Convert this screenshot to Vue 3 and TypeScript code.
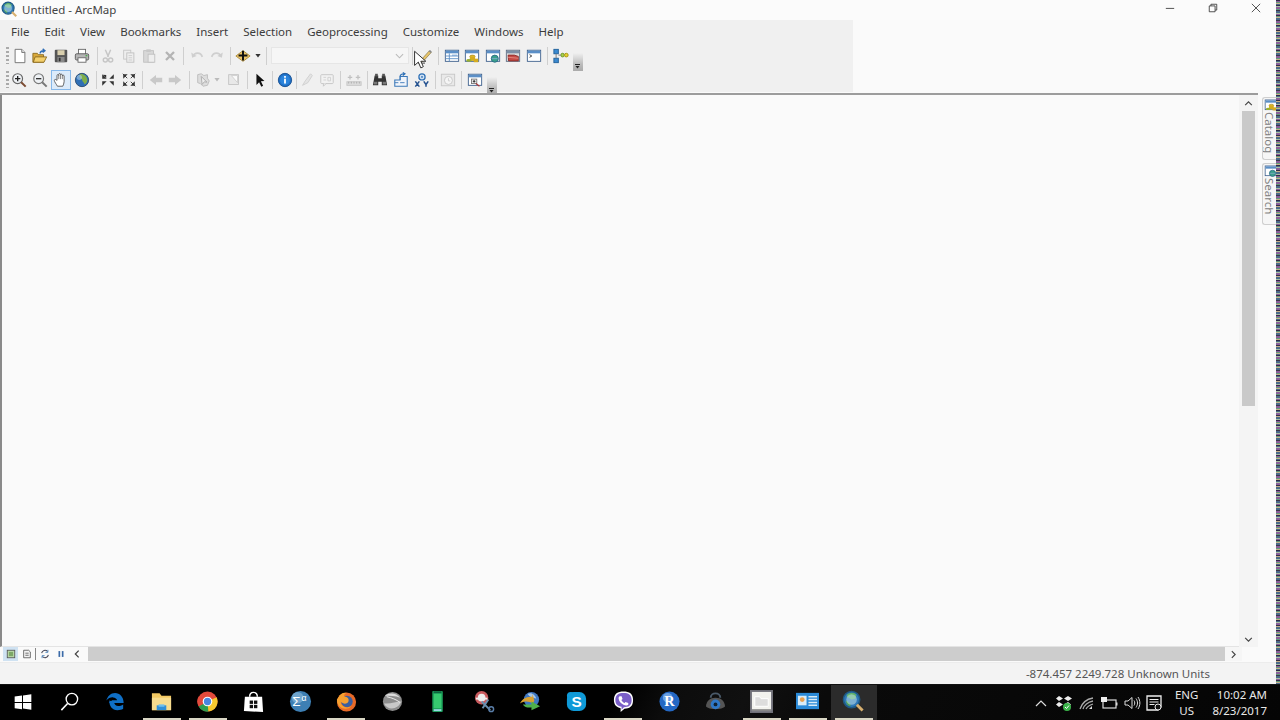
<script setup lang="ts">
interface Item { n: string; x: number; w?: number; h?: number }

const menus = ['File', 'Edit', 'View', 'Bookmarks', 'Insert', 'Selection', 'Geoprocessing', 'Customize', 'Windows', 'Help']

const row1: Item[] = [
  { n: 'grip', x: 7, w: 3 }, { n: 'new', x: 20 }, { n: 'open', x: 40 }, { n: 'save', x: 61 }, { n: 'print', x: 82 },
  { n: 'sep', x: 97, w: 1 }, { n: 'cut', x: 108 }, { n: 'copy', x: 129 }, { n: 'paste', x: 149 }, { n: 'del', x: 170 },
  { n: 'sep', x: 183, w: 1 }, { n: 'undo', x: 197 }, { n: 'redo', x: 217 }, { n: 'sep', x: 230, w: 1 },
  { n: 'add', x: 243 }, { n: 'caret', x: 258, w: 6 }, { n: 'sep', x: 266, w: 1 }, { n: 'combo', x: 340, w: 138 },
  { n: 'sep', x: 412, w: 1 }, { n: 'editor', x: 425 }, { n: 'sep', x: 438, w: 1 }, { n: 'table', x: 452 },
  { n: 'catalog', x: 472 }, { n: 'searchw', x: 493 }, { n: 'toolbox', x: 513 }, { n: 'python', x: 534 },
  { n: 'sep', x: 547, w: 1 }, { n: 'model', x: 561 }, { n: 'over', x: 577.5, w: 10 }
]
const row2: Item[] = [
  { n: 'grip', x: 7, w: 3 }, { n: 'zoomin', x: 19 }, { n: 'zoomout', x: 40 }, { n: 'pan', x: 61 }, { n: 'globe', x: 82 },
  { n: 'sep', x: 96, w: 1 }, { n: 'fixin', x: 108 }, { n: 'fixout', x: 129 }, { n: 'sep', x: 142, w: 1 },
  { n: 'back', x: 156 }, { n: 'fwd', x: 175 }, { n: 'sep', x: 189, w: 1 }, { n: 'selfeat', x: 203 }, { n: 'caretl', x: 217, w: 6 },
  { n: 'clear', x: 234 }, { n: 'sep', x: 247, w: 1 }, { n: 'pointer', x: 260 }, { n: 'sep', x: 272, w: 1 },
  { n: 'identify', x: 285 }, { n: 'sep', x: 296, w: 1 }, { n: 'flash', x: 307 }, { n: 'html', x: 327 }, { n: 'sep', x: 340, w: 1 },
  { n: 'measure', x: 354 }, { n: 'sep', x: 367, w: 1 }, { n: 'find', x: 380 }, { n: 'goto', x: 401 }, { n: 'xy', x: 422 },
  { n: 'sep', x: 435, w: 1 }, { n: 'time', x: 448 }, { n: 'sep', x: 461, w: 1 }, { n: 'viewer', x: 475 }, { n: 'over', x: 491.5, w: 10 }
]

function place(items: Item[]) {
  let right = 0
  return items.map((it) => {
    const w = it.w ?? 20
    const ml = it.x - w / 2 - right
    right = it.x + w / 2
    return { ...it, w, ml }
  })
}
const rows = [place(row1), place(row2)]

const win = (extra: string) =>
  `<rect x="1.5" y="2.5" width="15" height="12.5" fill="#fff" stroke="#3d5f8c"/><rect x="2" y="3" width="14" height="3" fill="#5b8fc7"/>${extra}`

const icons: Record<string, string> = {
  new: '<path d="M3.5 1.5h7.5l3.5 3.5v11.5h-11z" fill="#fff" stroke="#6a6a6a"/><path d="M11 1.5V5h3.5" fill="#e8e8e8" stroke="#6a6a6a"/>',
  open: '<path d="M1 16V6h5l1 1.5h6V16z" fill="#d9a93a" stroke="#8a6a20"/><path d="M1.5 16l2-6h13l-3 6z" fill="#f3cf6c" stroke="#8a6a20"/><path d="M9 6c.5-2 2-3 4-3M12 1l2.5 2-2.5 2" fill="none" stroke="#2f6db5" stroke-width="1.6"/>',
  save: '<rect x="2" y="2" width="14" height="14" rx="1" fill="#555"/><rect x="5" y="2.5" width="8" height="5.5" fill="#d9cfae"/><rect x="5" y="10" width="8" height="6" fill="#8a8a8a"/><rect x="6.5" y="11" width="2" height="4" fill="#333"/>',
  print: '<rect x="5" y="1.5" width="8" height="6" fill="#fff" stroke="#666"/><rect x="1.5" y="6.5" width="15" height="7" rx="1.5" fill="#b5b5b5" stroke="#555"/><rect x="4.5" y="11" width="9" height="5" fill="#fff" stroke="#666"/><rect x="13" y="8" width="2" height="1.4" fill="#4a4"/>',
  cut: '<path d="M6 2l3.5 8M12 2L8.5 10" stroke="#c6c6c6" stroke-width="1.6" fill="none"/><circle cx="6" cy="13.5" r="2.3" fill="none" stroke="#c6c6c6" stroke-width="1.6"/><circle cx="12" cy="13.5" r="2.3" fill="none" stroke="#c6c6c6" stroke-width="1.6"/>',
  copy: '<rect x="3" y="2.5" width="8" height="10" fill="#eee" stroke="#c6c6c6"/><rect x="6.5" y="5.5" width="8" height="10.5" fill="#eee" stroke="#c0c0c0"/><path d="M8.5 8.5h4M8.5 11h4M8.5 13.500h4" stroke="#ccc"/>',
  paste: '<rect x="3" y="3" width="11" height="13" fill="#d8d8d8" stroke="#c0c0c0"/><rect x="6" y="1.5" width="5" height="3" fill="#c8c8c8"/><rect x="8" y="7" width="7.500" height="9" fill="#eee" stroke="#c0c0c0"/>',
  del: '<path d="M4.500 4.500l9 9M13.500 4.500l-9 9" stroke="#b4b4b4" stroke-width="2.600"/>',
  undo: '<path d="M5 9c1-4 8-5 10 1" fill="none" stroke="#cfcfcf" stroke-width="2"/><path d="M2.500 5l1 6 5-2z" fill="#cfcfcf"/>',
  redo: '<path d="M13 9c-1-4-8-5-10 1" fill="none" stroke="#cfcfcf" stroke-width="2"/><path d="M15.500 5l-1 6-5-2z" fill="#cfcfcf"/>',
  add: '<path d="M9 3l8 6-8 6-8-6z" fill="#eec76a" stroke="#a98a3c"/><path d="M9 3v11M4 8.500h10" stroke="#111" stroke-width="2.200"/>',
  editor: '<path d="M5 13L14 3l2 2-9 10-3 1z" fill="#e8c56a" stroke="#8a7a4a" stroke-width=".8"/><path d="M1 17h8" stroke="#333"/><path d="M14 3l2 2" stroke="#888" stroke-width="2"/>',
  table: win('<path d="M2 9h14M2 12h14M6 6v9" stroke="#5b8fc7"/><rect x="9" y="7.500" width="6" height="1.200" fill="#7aa6d6"/>'),
  catalog: win('<ellipse cx="9.500" cy="9.500" rx="3" ry="1.500" fill="#e8c030" stroke="#8a7010" stroke-width=".6"/><rect x="6.500" y="9.500" width="6" height="5" fill="#d4ac20"/><ellipse cx="5.500" cy="14" rx="3" ry="1.500" fill="#9ab030"/><rect x="11" y="12" width="5" height="4" fill="#d4ac20"/>'),
  searchw: win('<circle cx="11" cy="12" r="4" fill="#3aa08a" stroke="#2a6a8a"/><path d="M8 12h6" stroke="#9ad" stroke-width=".8"/>'),
  toolbox: '<rect x="1.500" y="2.500" width="15" height="12.500" fill="#ddd" stroke="#5a6a80"/><rect x="2" y="3" width="14" height="3" fill="#7a8fa6"/><path d="M3.500 8h7l4.500 1.500v5h-11z" fill="#c44a45" stroke="#8a2a28"/><path d="M3.500 10.500l11.500 1" stroke="#e58a80"/>',
  python: win('<path d="M4 7.500l2.500 1.500-2.500 1.500" fill="none" stroke="#333" stroke-width="1"/>'),
  model: '<rect x="1" y="1.500" width="5" height="5" fill="#3b8ad0" stroke="#1f5f99"/><rect x="1" y="11.500" width="5" height="5" fill="#3b8ad0" stroke="#1f5f99"/><rect x="9" y="6" width="3.500" height="4" rx="1.500" fill="#a8d050" stroke="#6a9020"/><rect x="13" y="6" width="4" height="4" rx="1.800" fill="#e8d030" stroke="#a09010"/><path d="M3.500 6.500v5M6 8h3" stroke="#777"/>',
  zoomin: '<circle cx="7.500" cy="7.500" r="5.500" fill="#eef1f4" stroke="#666" stroke-width="1.300"/><path d="M7.500 4.500v6M4.500 7.500h6" stroke="#222" stroke-width="1.500"/><path d="M11.500 11.500l5 5" stroke="#7a4a30" stroke-width="2.200"/>',
  zoomout: '<circle cx="7.500" cy="7.500" r="5.500" fill="#eef1f4" stroke="#777" stroke-width="1.300"/><path d="M4.500 7.500h6" stroke="#333" stroke-width="1.500"/><path d="M11.500 11.500l5 5" stroke="#777" stroke-width="2.200"/>',
  pan: '<path d="M5 16c-1-2-3.500-5-3.500-6.500S3.500 8 4.500 9.500V4c0-1.500 2-1.500 2 0V2.800c0-1.500 2-1.500 2 0V3.500c0-1.400 2-1.400 2 0v1c0-1.300 2-1.300 2 0V11c0 2-1 3.500-1.500 5z" fill="#fff" stroke="#555"/><path d="M6.500 4v4M8.500 3.500V8M10.500 4.500V8" stroke="#555" stroke-width=".8"/>',
  globe: '<circle cx="9" cy="9" r="7.500" fill="#2f6fb5"/><path d="M7 2c4 0 8 3 8 7 0 2-1 4-3 5-1-3-3-3-3-6-2 0-3-2-3-3z" fill="#7fae4a"/><circle cx="6" cy="6" r="3" fill="#a8cdee" opacity=".6"/><circle cx="9" cy="9" r="7.500" fill="none" stroke="#2a4a70"/>',
  fixin: '<g fill="#333"><path d="M3 3l4 4V3.500zM3 3h0"/><path d="M2.500 2.500l5 5h-5zM15.500 2.500l-5 5h5zM2.500 15.500l5-5h-5zM15.500 15.500l-5-5h5z"/></g>',
  fixout: '<g fill="#333"><path d="M2.500 2.500h5l-5 5zM15.500 2.500h-5l5 5zM2.500 15.500h5l-5-5zM15.500 15.500h-5l5-5z"/></g><path d="M7 7L2 2M11 7l5-5M7 11l-5 5M11 11l5 5" stroke="#333"/>',
  back: '<path d="M9 3.500L2 9l7 5.500V11.500h7v-5H9z" fill="#c8c8c8"/>',
  fwd: '<path d="M9 3.500L16 9l-7 5.500V11.500H2v-5h7z" fill="#c8c8c8"/>',
  selfeat: '<path d="M3 3l4-1 3 2 4-1v4l2 3-2 5-5 1-3-3-3-1z" fill="#ddd" stroke="#bbb"/><path d="M7 5l1 9 2.500-3 3 .5z" fill="#eee" stroke="#aaa"/>',
  clear: '<rect x="3" y="3" width="11" height="11" fill="#e8e8e8" stroke="#c4c4c4"/><path d="M6 4l7 8v-8z" fill="#fafafa" stroke="#cdcdcd"/>',
  pointer: '<path d="M5 2l9 8-4 .5 2.500 5-2 1-2.500-5-3 3z" fill="#111"/>',
  identify: '<circle cx="9" cy="9" r="7.500" fill="#1f6fc4" stroke="#174f90"/><circle cx="9" cy="9" r="5.500" fill="#2b84dc"/><rect x="8" y="7.500" width="2" height="5.500" fill="#fff"/><rect x="8" y="4.500" width="2" height="2" fill="#fff"/>',
  flash: '<path d="M13 2L7 10l-3 5 6-3 5-8z" fill="#e4e4e4" stroke="#cfcfcf"/>',
  html: '<rect x="2" y="3" width="14" height="10" rx="1" fill="#f2f2f2" stroke="#c4c4c4"/><path d="M5 13v3l3-3" fill="#f2f2f2" stroke="#c4c4c4"/><path d="M5 6h3M5 9h3M10 6h3v4h-3z" stroke="#cfcfcf" fill="none"/>',
  measure: '<rect x="1" y="11" width="16" height="4" fill="#ddd" stroke="#c4c4c4"/><path d="M3 11v2M6 11v2M9 11v2M12 11v2M15 11v2" stroke="#aaa"/><path d="M2 6h5M4.500 3.500v5M11 6h5M13.500 3.500v5" stroke="#c0c0c0" stroke-width="1.400"/>',
  find: '<path d="M3 4h4v3h4V4h4l2 11h-6v-4H7v4H1z" fill="#333"/><rect x="3.500" y="2" width="3" height="3" fill="#555"/><rect x="11.500" y="2" width="3" height="3" fill="#555"/><rect x="2" y="11" width="4" height="3" fill="#777"/><rect x="12" y="11" width="4" height="3" fill="#777"/>',
  goto: '<path d="M8 5h8v11H2V9h6z" fill="#f0f4fa" stroke="#3b78b8" stroke-width="1.200"/><path d="M8 9V5M8 12h5M2 12h4" stroke="#3b78b8"/><path d="M8 5c0-2 2-3 4-3M11 .5l2.500 1.500L11 4" fill="none" stroke="#2d6fb5" stroke-width="1.300"/>',
  xy: '<circle cx="9" cy="5.500" r="3.500" fill="#cfe0f2" stroke="#2d6fb5" stroke-width="1.400"/><circle cx="9" cy="5.500" r="1" fill="#2d6fb5"/><path d="M1.500 10.500l4.500 6M6 10.500l-4.500 6M11 10.500l2.500 3.500v2.500M16 10.500L13.500 14" stroke="#22508f" stroke-width="1.700" fill="none"/>',
  time: '<rect x="1.500" y="2.500" width="15" height="13" fill="#e9e9e9" stroke="#c6c6c6"/><circle cx="9.500" cy="9.500" r="4.500" fill="#f5f5f5" stroke="#c6c6c6"/><path d="M9.500 7v3h2" stroke="#ccc" fill="none"/>',
  viewer: win('<rect x="5" y="8" width="6" height="5" fill="#eee" stroke="#777"/><path d="M6.500 10.500h3M8 9v3" stroke="#222"/><path d="M10 13l4 3" stroke="#a33" stroke-width="1.300"/>')
}

const bigIcons: Record<string, string> = {
  win: '<path d="M2 5.500L10.800 4.300V12H2zM12 4.100L22 2.800V12H12zM2 13.200h8.800v7.400L2 19.400zM12 13.200h10v8.100l-10-1.400z" fill="#fff"/>',
  search: '<circle cx="14.500" cy="9.500" r="6" fill="none" stroke="#fff" stroke-width="1.400"/><path d="M10 14L3.500 21" stroke="#fff" stroke-width="1.600"/>',
  edge: '<path d="M5 13.500h15.500C20.500 7 16.500 3 11.500 3 7 3 3.500 6.500 2.500 11c2-2.500 4.500-3.500 7-3.300 2 .2 4.200 1.600 4.300 3H8.500" fill="#0f6fc6"/><path d="M5.500 11c0 6 3 10 8.500 10 2.500 0 4.500-.5 6-1.500v-4.500c-4 2.500-9 2.500-9.500-2.500" fill="#0f6fc6"/>',
  folder: '<path d="M2 3.500h8l2 2.500h10v15H2z" fill="#f2c862"/><path d="M2 8h20v13H2z" fill="#f7dc8e"/><path d="M7 21v-5h10v5" fill="#2f8fd8"/><rect x="9" y="15" width="6" height="2.500" fill="#6fc0ee"/>',
  chrome: '<circle cx="12" cy="12" r="10.500" fill="#e24a3c"/><path d="M12 12L2.800 17.200A10.500 10.500 0 0 1 3 6.500z" fill="#e24a3c"/><path d="M12 12l-9.200 5.200A10.500 10.500 0 0 0 13 22.500z" fill="#2f9e4f"/><path d="M12 12l1 10.500A10.500 10.500 0 0 0 21.500 7.500z" fill="#f5c92f"/><circle cx="12" cy="12" r="5" fill="#fff"/><circle cx="12" cy="12" r="3.800" fill="#4a86e0"/>',
  store: '<path d="M3 7h18l1 16-20-1z" fill="#fff"/><path d="M8 7c0-6 8-6 8 0" fill="none" stroke="#fff" stroke-width="1.500"/><g fill="#111"><rect x="8" y="11" width="3.500" height="3.500"/><rect x="12.500" y="11" width="3.500" height="3.500"/><rect x="8" y="15.500" width="3.500" height="3.500"/><rect x="12.500" y="15.500" width="3.500" height="3.500"/></g>',
  firefox: '<circle cx="12" cy="12.500" r="10" fill="#e86a28"/><circle cx="12.500" cy="12" r="6" fill="#3a5fa0"/><path d="M4 7c1-3 5-5 8-4-3 1-3 4-1 4 2 .5 4 2 3 5-1 3-6 3-8 0 0 5 6 8 11 5-4 5-15 3-15-7z" fill="#f5a030"/>',
  gray: '<circle cx="12" cy="12" r="10" fill="#8d8d8d"/><path d="M4 6c5-4 12-3 16 2-5-2-11-2-16-2z" fill="#dcdcdc"/><path d="M3 14c6 1 13-2 18-2-2 7-13 11-18 2z" fill="#c8c8c8"/><path d="M6 7c5 1 10 3 14 6" stroke="#eee" fill="none"/>',
  battery: '<rect x="5.500" y="1" width="11" height="22" rx="1" fill="#1a9a58"/><rect x="7" y="4" width="8" height="15" fill="#36c96f"/><rect x="7" y="1.500" width="8" height="1.500" fill="#0d5a3c"/><rect x="7" y="20" width="8" height="2" fill="#96d8e0"/>',
  scissor: '<circle cx="9" cy="8" r="7" fill="#c85a5e"/><circle cx="9" cy="8" r="4" fill="#eee"/><path d="M9 12l9 9M16 10l-6 9" stroke="#6a8fb0" stroke-width="2"/><circle cx="19" cy="20" r="2.500" fill="none" stroke="#5a7ea8" stroke-width="1.500"/><path d="M3 9h12" stroke="#eee" stroke-width="2"/>',
  idm: '<circle cx="13" cy="10" r="8" fill="#3f78c2"/><path d="M9 4c4-2 8 1 9 5-3-1-7-1-9-5z" fill="#a8c8e8"/><path d="M1 14c3-6 8-7 13-7v-3l2 7-1 2-1 1c-3-2-8-3-13 0z" fill="#d8a030"/><path d="M4 15h9v-3l9 5-9 4v-3c-3 1-7 0-9-3z" fill="#4fb04a"/>',
  skype: '<rect x="2" y="2" width="20" height="20" rx="7" fill="#0f9ad8"/><circle cx="6" cy="6" r="4" fill="#0f9ad8"/><text x="12" y="18" text-anchor="middle" font-family="Liberation Sans" font-weight="700" font-size="16" fill="#fff">S</text>',
  viber: '<path d="M12 1.500c6 0 10 2 10 9s-4 9-9 9l-4 3.500v-4c-4-1-7-3-7-8.500 0-7 4-9 10-9z" fill="#fff"/><path d="M12 3c5 0 8.500 1.500 8.500 7.500S17 18 12.500 18l-2.500 2.500V17.500C6 17 3.500 15 3.500 10.500 3.500 4.500 7 3 12 3z" fill="#7a5fc8"/><path d="M8 6.500l2 0 1 3-1.200 1c.7 1.500 1.700 2.500 3.200 3.200l1-1.200 3 1v2c-1 1-3 1-5 0-3-1.500-4.500-3.500-5-6-.2-1.500 0-2.500 1-3z" fill="#fff"/>',
  r: '<circle cx="12" cy="12" r="10.500" fill="#2468c4"/><circle cx="10" cy="8" r="5" fill="#6aa0e4"/><text x="12" y="17" text-anchor="middle" font-family="Liberation Serif" font-weight="700" font-size="15" fill="#fff">R</text>',
  eye: '<path d="M2 17c1-6 4-9 10-9s9 3 10 9c-3 4-17 4-20 0z" fill="#555"/><circle cx="12" cy="15" r="5" fill="#2f78c8"/><circle cx="12" cy="15" r="2" fill="#123"/><path d="M7 8c0-6 10-6 10 0" fill="none" stroke="#4a5a6a" stroke-width="2"/>',
  gwin: '<rect x="0" y="0" width="24" height="24" fill="#707078"/><rect x="2" y="2" width="20" height="20" fill="#f2f2ee"/><path d="M5 7h5l1.500 2H19v8H5z" fill="#ddd" stroke="#fff"/><rect x="2" y="20" width="20" height="2" fill="#888"/>',
  card: '<rect x="0" y="3" width="24" height="17" fill="#2a8ad8"/><rect x="2" y="6" width="9" height="10" fill="#d8ecf8"/><circle cx="6.500" cy="10" r="2.500" fill="#e8a050"/><path d="M13 7h9M13 10h9M13 13h9M13 16h9" stroke="#d8ecf8" stroke-width="1.500"/>',
  arcmap: '<circle cx="10" cy="10" r="8.500" fill="#2f78b8"/><path d="M5 5c3-3 8-3 10 0l-1 4-4 1-3-2-2-1z" fill="#5fb06a"/><path d="M4 11c3 1 5 3 5 6-3 0-5-3-5-6z" fill="#4fa05a"/><circle cx="10" cy="10" r="5.500" fill="#bfe0e8" opacity=".55"/><circle cx="10" cy="10" r="8.500" fill="none" stroke="#1e5a84" stroke-width="1.600"/><path d="M15.500 15.500l6 6" stroke="#d8b070" stroke-width="3"/>'
}

const taskbar: { n: string; run?: boolean; active?: boolean; size?: number; sum?: boolean }[] = [
  { n: 'win', size: 22 }, { n: 'search' }, { n: 'edge' }, { n: 'folder', run: true }, { n: 'chrome', run: true },
  { n: 'store' }, { n: 'sigma' }, { n: 'firefox', run: true }, { n: 'gray' }, { n: 'battery' }, { n: 'scissor' },
  { n: 'idm' }, { n: 'skype' }, { n: 'viber', run: true }, { n: 'r' }, { n: 'eye' }, { n: 'gwin', run: true },
  { n: 'card', run: true }, { n: 'arcmap', run: true, active: true }
]
</script>

<template>
  <div class="screen">
    <div class="window">
      <div class="content">
        <header class="titlebar">
          <svg class="app-icon" viewBox="0 0 24 24" v-html="bigIcons.arcmap"></svg>
          <span class="title">Untitled - ArcMap</span>
          <div class="win-buttons">
            <svg class="wb" viewBox="0 0 12 12"><path d="M1 6.500h10" stroke="#333" /></svg>
            <svg class="wb" viewBox="0 0 12 12"><path d="M1.500 3.500h7v7h-7zM3.500 3.500v-2h7v7h-2" fill="none" stroke="#333" /></svg>
            <svg class="wb" viewBox="0 0 12 12"><path d="M1 1l10 10M11 1L1 11" stroke="#333" /></svg>
          </div>
        </header>

        <section class="toolband">
          <nav class="menubar">
            <span v-for="m in menus" :key="m" class="menu">{{ m }}</span>
          </nav>
          <div v-for="(row, r) in rows" :key="r" class="toolrow">
            <template v-for="(it, i) in row" :key="i">
              <span v-if="it.n === 'sep'" class="sep" :style="{ marginLeft: it.ml + 'px' }"></span>
              <span v-else-if="it.n === 'grip'" class="grip" :style="{ marginLeft: it.ml + 'px' }"></span>
              <span v-else-if="it.n === 'caret'" class="caret" :style="{ marginLeft: it.ml + 'px' }"></span>
              <span v-else-if="it.n === 'caretl'" class="caret light" :style="{ marginLeft: it.ml + 'px' }"></span>
              <span v-else-if="it.n === 'over'" class="over" :style="{ marginLeft: it.ml + 'px' }">
                <i class="over-bar"></i><i class="over-arrow"></i>
              </span>
              <span v-else-if="it.n === 'combo'" class="combo" :style="{ marginLeft: it.ml + 'px' }">
                <svg class="combo-chev" viewBox="0 0 10 6"><path d="M1 1l4 4 4-4" fill="none" stroke="#bbb" stroke-width="1.200" /></svg>
              </span>
              <span v-else class="slot" :class="{ selected: it.n === 'pan' }" :style="{ marginLeft: it.ml + 'px' }">
                <svg class="ticon" viewBox="0 0 18 18" v-html="icons[it.n]"></svg>
                <svg v-if="it.n === 'editor'" class="cursor" viewBox="0 0 16 24">
                  <path d="M1.500 1.500v17l4.500-4 3 7 3-1.500-3-6.500h6z" fill="#fff" stroke="#333" stroke-width="1.200" />
                </svg>
              </span>
            </template>
          </div>
        </section>

        <div class="divider"></div>

        <section class="workspace">
          <main class="map"></main>
          <aside class="vscroll">
            <svg class="chev" viewBox="0 0 10 6"><path d="M1 5l4-4 4 4" fill="none" stroke="#444" stroke-width="1.400" /></svg>
            <div class="vtrack"><div class="vthumb"></div></div>
            <svg class="chev" viewBox="0 0 10 6"><path d="M1 1l4 4 4-4" fill="none" stroke="#444" stroke-width="1.400" /></svg>
          </aside>
          <aside class="dock">
            <div class="dock-tab catalog-tab">
              <svg class="dock-icon" viewBox="0 0 18 18" v-html="icons.catalog"></svg>
              <span class="dock-label">Catalog</span>
            </div>
            <div class="dock-tab search-tab">
              <svg class="dock-icon" viewBox="0 0 18 18" v-html="icons.searchw"></svg>
              <span class="dock-label">Search</span>
            </div>
          </aside>
        </section>

        <section class="bottombar">
          <div class="view-btns">
            <span class="vb active"><svg viewBox="0 0 12 12"><rect x="1.500" y="1.500" width="9" height="9" fill="#b9d8a8" stroke="#555" /><rect x="3.500" y="3.500" width="5" height="5" fill="#7da868" /></svg></span>
            <span class="vb"><svg viewBox="0 0 12 12"><path d="M2 1.500h6l2 2v7H2z" fill="#f4f4f4" stroke="#555" /><path d="M4 5h4M4 7.500h4" stroke="#555" /></svg></span>
            <span class="bsep"></span>
            <span class="vb"><svg viewBox="0 0 12 12"><path d="M2 5a4 4 0 0 1 7-2M10 7a4 4 0 0 1-7 2" fill="none" stroke="#445" stroke-width="1.300" /><path d="M9.500 1v3h-3M2.500 11V8h3" fill="none" stroke="#3a78b8" /></svg></span>
            <span class="vb"><svg viewBox="0 0 12 12"><rect x="3" y="2.500" width="2" height="7" fill="#3a6aa8" /><rect x="7" y="2.500" width="2" height="7" fill="#3a6aa8" /></svg></span>
            <span class="vb"><svg viewBox="0 0 12 12"><path d="M8 2L4 6l4 4" fill="none" stroke="#444" stroke-width="1.500" /></svg></span>
          </div>
          <div class="htrack"></div>
          <div class="hend">
            <svg viewBox="0 0 6 10"><path d="M1 1l4 4-4 4" fill="none" stroke="#444" stroke-width="1.400" /></svg>
          </div>
        </section>

        <footer class="status"><span class="coords">-874.457  2249.728 Unknown Units</span></footer>
      </div>
      <div class="noise"></div>
    </div>

    <div class="taskbar">
      <div class="apps">
        <div v-for="t in taskbar" :key="t.n" class="tslot" :class="{ active: t.active }">
          <svg v-if="t.n === 'sigma'" class="ticonbig" viewBox="0 0 24 24">
            <circle cx="12" cy="12" r="11" fill="#3d7fb4" />
            <circle cx="9" cy="8" r="6" fill="#6ea3cb" />
            <text x="3.500" y="17" font-family="Liberation Sans" font-size="14" fill="#fff">Σ</text>
            <text x="13" y="11" font-family="Liberation Sans" font-size="9" fill="#fff">α</text>
          </svg>
          <svg v-else class="ticonbig" :class="{ small: t.n === 'win' }" viewBox="0 0 24 24" v-html="bigIcons[t.n]"></svg>
          <i class="runbar" :class="{ on: t.run }"></i>
        </div>
      </div>
      <div class="tray">
        <svg class="tri chevtray" viewBox="0 0 12 8"><path d="M1 7l5-5 5 5" fill="none" stroke="#ddd" stroke-width="1.200" /></svg>
        <svg class="tri drop" viewBox="0 0 18 18">
          <path d="M4 2l4 2.500L4 7 1 4.500zM13 2l4 2.500L13 7 9 4.500zM4 8l4 2.500L4 13 1 10.500zM13 8l3 2.500-3 2.500-4-2.500z" fill="#eee" />
          <circle cx="12" cy="13" r="4" fill="#3bb54a" /><path d="M10 13l1.500 1.500 2.500-3" stroke="#fff" fill="none" />
        </svg>
        <svg class="tri wifi" viewBox="0 0 18 18">
          <path d="M2 15C4 9 9 5 15 4M5 15c1-3.500 5-7 10-8M8 15c1-2 4-4 7-5" fill="none" stroke="#aaa" stroke-width="1.300" />
          <path d="M11 15l3-3v3z" fill="#ddd" />
        </svg>
        <svg class="tri batt" viewBox="0 0 18 18">
          <rect x="3" y="6" width="13" height="8" fill="none" stroke="#ddd" stroke-width="1.200" />
          <rect x="1" y="3" width="6" height="5" fill="#eee" /><rect x="16" y="8.500" width="1.500" height="3" fill="#ddd" />
        </svg>
        <svg class="tri vol" viewBox="0 0 18 18">
          <path d="M2 7h3l4-3.500v11L5 11H2z" fill="none" stroke="#ddd" />
          <path d="M11 6.500c1 1.500 1 3.500 0 5M13 4.500c2 3 2 6 0 9M15 3c2.500 4 2.500 8 0 12" fill="none" stroke="#ddd" />
        </svg>
        <svg class="tri note" viewBox="0 0 18 18">
          <path d="M2 2h14v11l-3 3H2z" fill="none" stroke="#eee" stroke-width="1.300" />
          <path d="M4.500 5.500h9M4.500 8h9M4.500 10.500h5" stroke="#eee" />
          <circle cx="13" cy="13" r="3" fill="#111" stroke="#eee" />
        </svg>
        <div class="lang"><span>ENG</span><span>US</span></div>
        <div class="clock"><span>10:02 AM</span><span>8/23/2017</span></div>
      </div>
    </div>
  </div>
</template>

<style scoped>
.screen {
  width: 1280px;
  height: 720px;
  display: flex;
  flex-direction: column;
  overflow: hidden;
  font-family: "Noto Sans", "Open Sans", sans-serif;
  background: #fafafa;
}
.window {
  height: 684px;
  display: flex;
}
.content {
  width: 1276px;
  display: flex;
  flex-direction: column;
}
.noise {
  width: 4px;
  background:
    repeating-linear-gradient(180deg, rgba(40, 30, 60, 0.85) 0 1px, transparent 1px 5px),
    repeating-linear-gradient(180deg, #8a5f9a 0 2px, #5f9a7a 2px 3px, #c9b08a 3px 4px, #4a6a8a 4px 6px, #a8c0a0 6px 7px);
}
.titlebar {
  height: 20px;
  display: flex;
  align-items: center;
  background: #fbfbfb;
  position: relative;
}
.app-icon {
  width: 17px;
  height: 17px;
  margin-left: 1px;
}
.title {
  margin-left: 4px;
  font-size: 11.5px;
  color: #444;
}
.win-buttons {
  margin-left: auto;
  display: flex;
  align-items: center;
  margin-top: -3px;
}
.wb {
  width: 10px;
  height: 10px;
  margin-left: 33px;
}
.wb:last-child {
  margin-right: 15px;
}
.toolband {
  width: 853px;
  height: 72px;
  background: #f0f0f0;
  display: flex;
  flex-direction: column;
}
.menubar {
  height: 24px;
  display: flex;
  align-items: center;
  gap: 15px;
  padding-left: 11px;
}
.menu {
  font-size: 11.500px;
  color: #3c3c3c;
}
.toolrow {
  height: 24px;
  display: flex;
  align-items: center;
}
.slot {
  width: 20px;
  height: 20px;
  flex: none;
  display: flex;
  align-items: center;
  justify-content: center;
  position: relative;
  box-sizing: border-box;
}
.slot.selected {
  background: #dcebfa;
  border: 1px solid #86b8ea;
}
.ticon {
  width: 16px;
  height: 16px;
  flex: none;
}
.cursor {
  position: absolute;
  left: -2px;
  top: 4px;
  width: 14px;
  height: 20px;
}
.sep {
  width: 1px;
  height: 18px;
  flex: none;
  background: #cfcfcf;
}
.grip {
  width: 3px;
  height: 17px;
  flex: none;
  background: repeating-linear-gradient(180deg, #aaa 0 2px, transparent 2px 4px);
}
.caret {
  width: 6px;
  height: 4px;
  flex: none;
  background: #333;
  clip-path: polygon(0 0, 100% 0, 50% 100%);
}
.caret.light {
  background: #bbb;
}
.over {
  width: 10px;
  height: 18px;
  flex: none;
  margin-top: 6px;
  margin-bottom: -6px;
  background: linear-gradient(180deg, #f0f0f0, #bdbdbd 60%, #aaa);
  display: flex;
  flex-direction: column;
  align-items: center;
  justify-content: flex-end;
  gap: 1px;
  padding-bottom: 2px;
  box-sizing: border-box;
}
.over-bar {
  width: 5px;
  height: 1px;
  background: #222;
}
.over-arrow {
  width: 5px;
  height: 3px;
  background: #222;
  clip-path: polygon(0 0, 100% 0, 50% 100%);
}
.combo {
  width: 138px;
  height: 17px;
  flex: none;
  background: #f6f6f6;
  border: 1px solid #e6e6e6;
  box-sizing: border-box;
  display: flex;
  align-items: center;
  justify-content: flex-end;
  padding-right: 4px;
}
.combo-chev {
  width: 9px;
  height: 6px;
}
.divider {
  width: 1258px;
  height: 2px;
  margin-top: 1px;
  background: #9c9c9c;
}
.workspace {
  height: 552px;
  display: flex;
}
.map {
  width: 1239px;
  background: #fafafa;
  border-left: 2px solid #8a8a8a;
  border-bottom: 1px solid #e4e4e4;
  box-sizing: border-box;
  height: 552px;
}
.vscroll {
  width: 19px;
  display: flex;
  flex-direction: column;
  align-items: center;
  background: #f4f4f4;
}
.chev {
  width: 9px;
  height: 5px;
  margin: 6px 0 5px;
  flex: none;
}
.vtrack {
  flex: 1;
  width: 13px;
}
.vthumb {
  width: 13px;
  height: 295px;
  background: #c9c9c9;
}
.dock {
  width: 18px;
  padding: 2px 0 0 4px;
  display: flex;
  flex-direction: column;
  gap: 3px;
  box-sizing: border-box;
}
.dock-tab {
  width: 14px;
  border: 1px solid #cfcfcf;
  border-right: 0;
  border-radius: 3px 0 0 3px;
  display: flex;
  flex-direction: column;
  align-items: center;
  box-sizing: border-box;
  overflow: hidden;
  background: #f6f6f6;
}
.catalog-tab {
  height: 63px;
}
.search-tab {
  height: 62px;
}
.dock-icon {
  width: 14px;
  height: 14px;
  flex: none;
  margin-left: 3px;
}
.dock-label {
  writing-mode: vertical-rl;
  font-size: 11.500px;
  color: #808080;
  line-height: 13px;
}
.bottombar {
  height: 15px;
  display: flex;
  align-items: center;
}
.view-btns {
  display: flex;
  align-items: center;
  padding-left: 3px;
  width: 88px;
  box-sizing: border-box;
  height: 15px;
}
.vb {
  width: 15px;
  height: 14px;
  margin-right: 1px;
  display: flex;
  align-items: center;
  justify-content: center;
}
.vb svg {
  width: 10px;
  height: 10px;
}
.vb.active {
  background: #cfe2f2;
}
.bsep {
  width: 1px;
  height: 12px;
  background: #888;
  margin: 0 1px 0 0;
}
.htrack {
  width: 1137px;
  height: 14px;
  background: #cdcdcd;
}
.hend {
  width: 17px;
  height: 14px;
  background: #f6f6f6;
  display: flex;
  align-items: center;
  justify-content: center;
}
.hend svg {
  width: 5px;
  height: 9px;
}
.status {
  height: 23px;
  background: #f3f3f3;
  border-top: 1px solid #ececec;
  box-sizing: border-box;
  display: flex;
  align-items: center;
  justify-content: flex-end;
  padding-right: 66px;
  width: 1276px;
}
.coords {
  font-size: 11.500px;
  color: #555;
  white-space: pre;
}
.taskbar {
  height: 36px;
  background: linear-gradient(115deg, #000 0 48%, #0c0c0c 52%, #101010 58%, #0a0a0a 64%, #050505 100%);
  display: flex;
  border-top: 1px solid #111;
  box-sizing: border-box;
}
.apps {
  display: flex;
}
.tslot {
  width: 46.170px;
  flex: none;
  display: flex;
  flex-direction: column;
  align-items: center;
  padding-top: 5px;
  box-sizing: border-box;
}
.tslot.active {
  background: #2b2b2b;
}
.ticonbig {
  width: 23px;
  height: 23px;
  flex: none;
}
.ticonbig.small {
  width: 20px;
  height: 20px;
  margin-top: 2px;
}
.runbar {
  margin-top: auto;
  width: 38px;
  height: 2px;
}
.runbar.on {
  background: #d9d6c4;
}
.tray {
  margin-left: auto;
  display: flex;
  align-items: center;
  padding-right: 13px;
  color: #e8e8e8;
  font-size: 11.500px;
}
.tri {
  width: 18px;
  height: 18px;
  flex: none;
  margin-right: 4.500px;
}
.chevtray {
  width: 12px;
  height: 8px;
  margin-right: 8px;
}
.lang,
.clock {
  display: flex;
  flex-direction: column;
  align-items: center;
  line-height: 16px;
}
.lang {
  margin: 0 14px 0 7px;
}
.clock {
  align-items: flex-end;
}
</style>
